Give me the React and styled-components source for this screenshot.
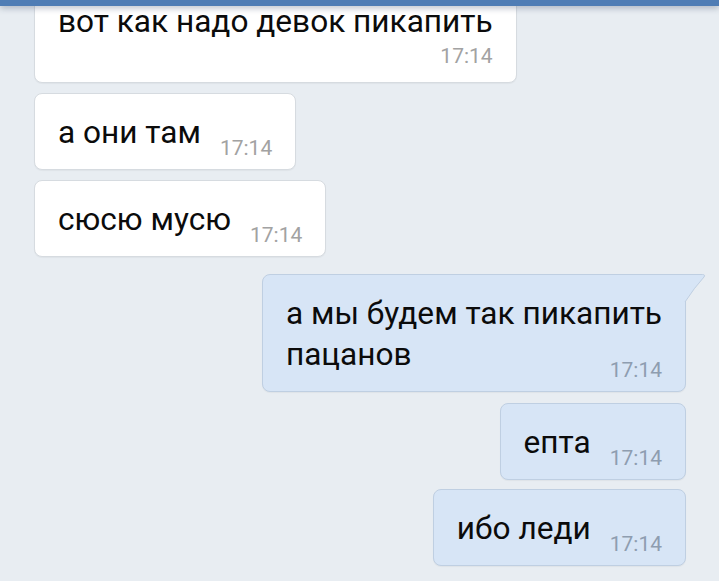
import React from "react";
import styled, { createGlobalStyle } from "styled-components";

const Global = createGlobalStyle`
  html, body { margin: 0; padding: 0; }
  body { background: #e8edf2; font-family: Roboto, "Noto Sans", sans-serif; }
`;

const Screen = styled.div`
  width: 719px;
  height: 581px;
  display: flex;
  flex-direction: column;
  overflow: hidden;
  background: #e8edf2;
`;

const Toolbar = styled.div`
  flex: 0 0 6px;
  background: #4f7db5;
  box-shadow: 0 2px 6px rgba(40, 60, 90, 0.35);
  position: relative;
  z-index: 2;
`;

const ChatArea = styled.div`
  flex: 1;
  overflow: hidden;
`;

const List = styled.div`
  display: flex;
  flex-direction: column;
  margin-top: -24px;
  padding: 0 33px 0 34px;
`;

const Row = styled.div`
  display: flex;
  justify-content: ${(p) => (p.$out ? "flex-end" : "flex-start")};
  margin-top: ${(p) => p.$gap}px;
`;

const Bubble = styled.div`
  position: relative;
  display: flow-root;
  box-sizing: border-box;
  background: ${(p) => (p.$out ? "#d7e5f6" : "#ffffff")};
  border: 1px solid ${(p) => (p.$out ? "#bfcfe2" : "#d6dbe0")};
  border-radius: ${(p) => (p.$tail ? "8px 0 8px 8px" : "8px")};
  box-shadow: 0 1px 1px rgba(0, 0, 0, 0.04);
  padding: 18px 23px 0 23px;
  color: #0b0b0b;
  font-size: 31.6px;
  line-height: 41px;
  white-space: pre-line;
`;

const Time = styled.span`
  float: right;
  margin: 26px 0 10px 19px;
  font-size: 21px;
  line-height: 21px;
  color: ${(p) => (p.$out ? "#8e9db0" : "#a2a2a2")};
`;

const TimeLine = styled.div`
  text-align: right;
  margin: 4px 0 15px;
  font-size: 21px;
  line-height: 21px;
  color: #a2a2a2;
`;

const TailSvg = styled.svg`
  position: absolute;
  top: -1px;
  right: -21px;
  width: 22px;
  height: 30px;
  overflow: visible;
`;

const Tail = () => (
  <TailSvg viewBox="0 0 22 30">
    <path
      d="M0 0.5 L18.5 0.5 Q21.5 0.5 20 3 Q10 14 1 28 L0 28 Z"
      fill="#d7e5f6"
    />
    <path
      d="M0 0.5 L18.5 0.5 Q21.5 0.5 20 3 Q10 14 1 28"
      fill="none"
      stroke="#bfcfe2"
      strokeWidth="1"
    />
  </TailSvg>
);

const messages = [
  { text: "вот как надо девок пикапить", out: false, below: true, gap: 0 },
  { text: "а они там", out: false, gap: 10 },
  { text: "сюсю мусю", out: false, gap: 10 },
  { text: "а мы будем так пикапить\nпацанов", out: true, tail: true, gap: 17 },
  { text: "епта", out: true, gap: 11 },
  { text: "ибо леди", out: true, gap: 9 },
];

export default function App() {
  return (
    <>
      <Global />
      <Screen>
        <Toolbar />
        <ChatArea>
          <List>
            {messages.map((m, i) => (
              <Row key={i} $out={m.out} $gap={m.gap}>
                <Bubble $out={m.out} $tail={m.tail}>
                  {m.below ? (
                    <>
                      <div>{m.text}</div>
                      <TimeLine>17:14</TimeLine>
                    </>
                  ) : (
                    <>
                      {m.text}
                      <Time $out={m.out}>17:14</Time>
                    </>
                  )}
                  {m.tail && <Tail />}
                </Bubble>
              </Row>
            ))}
          </List>
        </ChatArea>
      </Screen>
    </>
  );
}
